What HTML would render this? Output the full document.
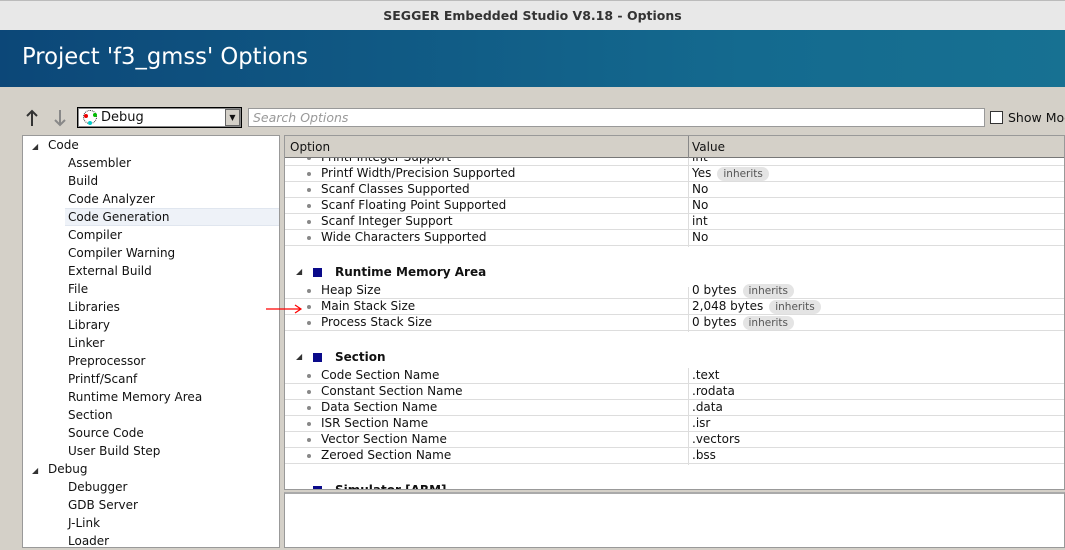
<!DOCTYPE html><html><head><style>
*{margin:0;padding:0;box-sizing:border-box}
body{width:1065px;height:548px;overflow:hidden;background:#d4d0c8;font-family:"DejaVu Sans","Liberation Sans",sans-serif;font-size:12px;color:#111;position:relative}
.a{position:absolute;white-space:nowrap}
.tb{left:0;top:0;width:1065px;height:30px;background:#e8e8e8;border-top:1px solid #bbb;text-align:center;line-height:30px;font-size:12.5px;font-weight:bold;color:#333}
.hd{left:0;top:30px;width:1065px;height:57px;background:linear-gradient(90deg,#0c4778,#146a8f 70%,#177192)}
.hd span{position:absolute;left:22px;top:14px;color:#fff;font-size:22.7px}
.tree{left:22px;top:135px;width:258px;height:413px;background:#fff;border:1px solid #999}
.tree div{position:absolute;height:18px;line-height:18px}
.tbl{left:284px;top:135px;width:781px;height:355px;background:#fff;border:1px solid #999;overflow:hidden}
.hrow{position:absolute;left:0;top:0;width:781px;height:22px;background:#d4d0c8;border-bottom:1px solid #777;line-height:22px}
.r{position:absolute;left:0;width:781px;height:16px;line-height:15px;border-bottom:1px solid #ddd}
.r .o{position:absolute;left:36px}.r .v{position:absolute;left:407px}
.r .d{position:absolute;left:22px;top:6px;width:4px;height:4px;border-radius:2px;background:#888}
.vl{position:absolute;left:403px;top:0;width:1px;height:100%;background:#ddd}
.pill{display:inline-block;margin-left:6px;padding:0 6px;background:#e4e4e4;border-radius:8px;font-size:10.5px;color:#555;line-height:14px}
.g{position:absolute;left:0;height:20px;line-height:20px;font-weight:bold}
.g i{position:absolute;left:28px;top:6px;width:9px;height:9px;background:#0a0a8a}
.g b{position:absolute;left:50px}
.tri{position:absolute;font-size:8px;color:#333}
</style></head><body>
<div class="a tb">SEGGER Embedded Studio V8.18 - Options</div>
<div class="a hd"><span>Project 'f3_gmss' Options</span></div>
<svg class="a" style="left:25px;top:109px" width="14" height="18"><path d="M7 17V2M2 7L7 2L12 7" stroke="#333" stroke-width="2" fill="none"/></svg>
<svg class="a" style="left:53px;top:109px" width="14" height="18"><path d="M7 1V16M2 11L7 16L12 11" stroke="#888" stroke-width="2" fill="none"/></svg>
<div class="a" style="left:77px;top:107px;width:165px;height:21px;background:#fff;border:1px solid #000;box-shadow:inset 0 0 0 1px #888"></div>
<div class="a" style="left:83px;top:110px;width:14px;height:14px;border:1px dotted #333;border-radius:50%"></div>
<div class="a" style="left:84px;top:114px;width:4px;height:4px;background:#e00;border-radius:2px"></div>
<div class="a" style="left:93px;top:113px;width:4px;height:4px;background:#0b0;border-radius:2px"></div>
<div class="a" style="left:88px;top:121px;width:4px;height:4px;background:#0cc;border-radius:2px"></div>
<div class="a" style="left:101px;top:110px;font-size:13px">Debug</div>
<div class="a" style="left:225px;top:109px;width:15px;height:17px;background:#d4d0c8;border:1px solid #666;font-size:8px;text-align:center;line-height:16px">▼</div>
<div class="a" style="left:248px;top:108px;width:737px;height:19px;background:#fff;border:1px solid #999;color:#999;font-style:italic;padding-left:4px;line-height:17px;font-size:12.5px">Search Options</div>
<div class="a" style="left:990px;top:111px;width:13px;height:13px;background:#fff;border:1px solid #333"></div>
<div class="a" style="left:1008px;top:110px;font-size:12.5px">Show Mod</div>
<div class="a tree">
<div class="tri" style="left:9px;top:2px">◢</div>
<div style="left:25px;top:0">Code</div>
<div style="left:45px;top:18px">Assembler</div>
<div style="left:45px;top:36px">Build</div>
<div style="left:45px;top:54px">Code Analyzer</div>
<div style="left:42px;top:72px;width:214px;background:#eef2f8;border-top:1px solid #e0e6ef;border-bottom:1px solid #e0e6ef;padding-left:3px;line-height:16px">Code Generation</div>
<div style="left:45px;top:90px">Compiler</div>
<div style="left:45px;top:108px">Compiler Warning</div>
<div style="left:45px;top:126px">External Build</div>
<div style="left:45px;top:144px">File</div>
<div style="left:45px;top:162px">Libraries</div>
<div style="left:45px;top:180px">Library</div>
<div style="left:45px;top:198px">Linker</div>
<div style="left:45px;top:216px">Preprocessor</div>
<div style="left:45px;top:234px">Printf/Scanf</div>
<div style="left:45px;top:252px">Runtime Memory Area</div>
<div style="left:45px;top:270px">Section</div>
<div style="left:45px;top:288px">Source Code</div>
<div style="left:45px;top:306px">User Build Step</div>
<div class="tri" style="left:9px;top:326px">◢</div>
<div style="left:25px;top:324px">Debug</div>
<div style="left:45px;top:342px">Debugger</div>
<div style="left:45px;top:360px">GDB Server</div>
<div style="left:45px;top:378px">J-Link</div>
<div style="left:45px;top:396px">Loader</div>
</div>
<div class="a tbl">
<div class="vl"></div>
<div class="r" style="top:14px"><span class="d"></span><span class="o">Printf Integer Support</span><span class="v">int</span></div>
<div class="hrow" style="z-index:2"><span style="position:absolute;left:5px">Option</span><span style="position:absolute;left:407px">Value</span><span style="position:absolute;left:403px;top:0;width:1px;height:22px;background:#888"></span></div>
<div class="r" style="top:30px"><span class="d"></span><span class="o">Printf Width/Precision Supported</span><span class="v">Yes<span class="pill">inherits</span></span></div>
<div class="r" style="top:46px"><span class="d"></span><span class="o">Scanf Classes Supported</span><span class="v">No</span></div>
<div class="r" style="top:62px"><span class="d"></span><span class="o">Scanf Floating Point Supported</span><span class="v">No</span></div>
<div class="r" style="top:78px"><span class="d"></span><span class="o">Scanf Integer Support</span><span class="v">int</span></div>
<div class="r" style="top:94px"><span class="d"></span><span class="o">Wide Characters Supported</span><span class="v">No</span></div>
<div style="position:absolute;left:0;top:111px;width:781px;height:40px;background:#fff"></div>
<div class="g" style="top:126px;width:781px;background:#fff"><span class="tri" style="left:11px;top:0">◢</span><i></i><b>Runtime Memory Area</b></div>
<div class="r" style="top:147px"><span class="d"></span><span class="o">Heap Size</span><span class="v">0 bytes<span class="pill">inherits</span></span></div>
<div class="r" style="top:163px"><span class="d"></span><span class="o">Main Stack Size</span><span class="v">2,048 bytes<span class="pill">inherits</span></span></div>
<div class="r" style="top:179px"><span class="d"></span><span class="o">Process Stack Size</span><span class="v">0 bytes<span class="pill">inherits</span></span></div>
<div style="position:absolute;left:0;top:196px;width:781px;height:36px;background:#fff"></div>
<div class="g" style="top:211px;width:781px;background:#fff"><span class="tri" style="left:11px;top:0">◢</span><i></i><b>Section</b></div>
<div class="r" style="top:232px"><span class="d"></span><span class="o">Code Section Name</span><span class="v">.text</span></div>
<div class="r" style="top:248px"><span class="d"></span><span class="o">Constant Section Name</span><span class="v">.rodata</span></div>
<div class="r" style="top:264px"><span class="d"></span><span class="o">Data Section Name</span><span class="v">.data</span></div>
<div class="r" style="top:280px"><span class="d"></span><span class="o">ISR Section Name</span><span class="v">.isr</span></div>
<div class="r" style="top:296px"><span class="d"></span><span class="o">Vector Section Name</span><span class="v">.vectors</span></div>
<div class="r" style="top:312px"><span class="d"></span><span class="o">Zeroed Section Name</span><span class="v">.bss</span></div>
<div style="position:absolute;left:0;top:329px;width:781px;height:30px;background:#fff"></div>
<div class="g" style="top:344px"><i></i><b>Simulator [ARM]</b></div>
</div>
<div class="a" style="left:284px;top:492px;width:781px;height:56px;background:#fff;border:1px solid #999;border-top:2px solid #aaa"></div>
<svg class="a" style="left:265px;top:303px" width="40" height="12"><path d="M1 6H36M30 2L36 6L30 10" stroke="#f00" stroke-width="1.2" fill="none"/></svg>
</body></html>
